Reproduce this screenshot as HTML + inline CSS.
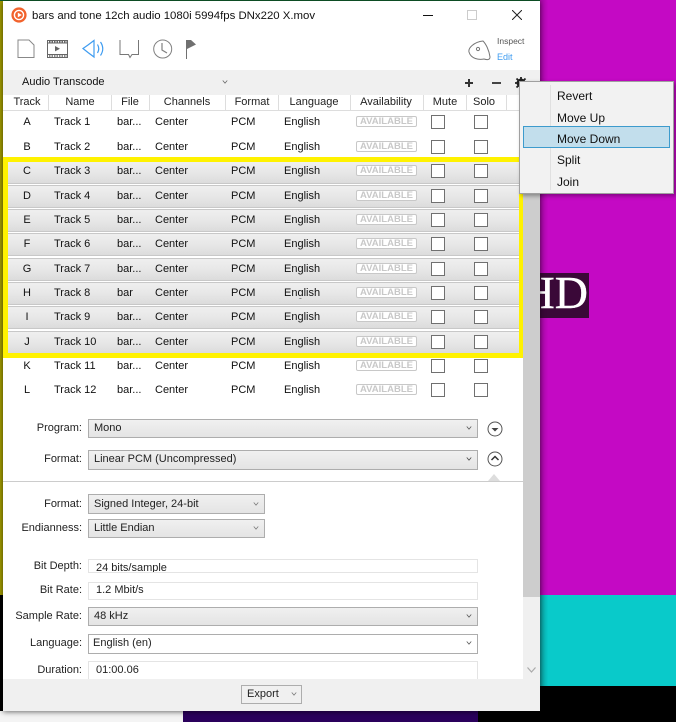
<!DOCTYPE html>
<html><head><meta charset="utf-8">
<style>
html,body{margin:0;padding:0;width:676px;height:722px;overflow:hidden;background:#000}
body{position:relative;font:11px "Liberation Sans",sans-serif;color:#111}
div,span,svg{position:absolute}
.win{left:3px;top:1px;width:537px;height:710px;background:#fff;box-shadow:0 1px 5px rgba(0,0,0,.55);overflow:hidden}
.t{white-space:nowrap;line-height:14px}
.h{top:94px;height:14px;line-height:14px;color:#222;white-space:nowrap;transform:translateX(-50%)}
.dv{top:94px;width:1px;height:15px;background:#ddd}
.r{left:0;width:520px;height:24px;overflow:hidden}
.g{left:5px;width:511px;height:21px;background:linear-gradient(#efefef,#e8e8e8 45%,#dcdcdc);border-top:1px solid #c8c8c8;border-bottom:1px solid #c8c8c8}
.r span{top:4px;line-height:14px;white-space:nowrap}
.a{left:0;width:48px;text-align:center}.b{left:51px}.c{left:114px}.d{left:152px}.e{left:228px}.f{left:281px}
.av{left:353px;top:5px!important;width:59px;height:9px;border:1px solid #c8c8c8;border-radius:2px;color:#c8c8c8;font-size:9.5px;font-weight:bold;line-height:9px!important;text-align:center;background:#fff;overflow:hidden}
.m,.s{top:4px!important;width:12px;height:12px;border:1px solid #707070;background:#fff}
.m{left:428px}.s{left:471px}
.lb{width:79px;left:0;text-align:right;line-height:14px;white-space:nowrap;color:#222}
.sel{left:85px;box-sizing:border-box;border:1px solid #adadad;background:linear-gradient(#f0f0f0,#e4e4e4);line-height:17px;padding-left:5px;color:#222;white-space:nowrap}
.fld{left:85px;box-sizing:border-box;width:390px;border:1px solid #e4e4e4;background:#fff;overflow:hidden;color:#222;white-space:nowrap}
.ch{width:6px;height:4px}
</style></head><body>
<!-- desktop -->
<div style="left:0;top:0;width:3px;height:595px;background:#a09a00"></div>
<div style="left:0;top:0;width:540px;height:1px;background:#0e5a2a"></div>
<div style="left:540px;top:0;width:136px;height:595px;background:linear-gradient(90deg,#a0089f,#c409c4 8px)"></div>
<div style="left:540px;top:595px;width:136px;height:91px;background:linear-gradient(90deg,#0a9a9a,#09caca 8px)"></div>
<div style="left:0;top:711px;width:183px;height:11px;background:#f4f4f4"></div>
<div style="left:183px;top:711px;width:295px;height:11px;background:#2a005c"></div>
<div style="left:540px;top:273px;width:49px;height:45px;background:#3a0838;overflow:hidden"><span style="right:1px;top:-4px;font:46px/48px 'Liberation Serif',serif;color:#fff;white-space:nowrap;-webkit-text-stroke:.4px #fff">HD</span></div>

<div class="win">
 <!-- title -->
 <svg style="left:8px;top:6px" width="16" height="16" viewBox="0 0 16 16"><circle cx="8" cy="8" r="7.6" fill="#f2622c"/><circle cx="8" cy="8" r="4.6" fill="none" stroke="#fff" stroke-width="1.4"/><path d="M6.8 5.6L10.8 8L6.8 10.4Z" fill="#fff"/></svg>
 <div class="t" style="left:29px;top:8px;font-size:11.4px;color:#111">bars and tone 12ch audio 1080i 5994fps DNx220 X.mov</div>
 <div style="left:420px;top:14px;width:10px;height:1px;background:#111"></div>
 <div style="left:464px;top:9px;width:8px;height:8px;border:1px solid #ccc"></div>
 <svg style="left:509px;top:9px" width="10" height="10" viewBox="0 0 10 10"><path d="M0 0L10 10M10 0L0 10" stroke="#222" stroke-width="1"/></svg>

 <!-- toolbar icons -->
 <svg style="left:14px;top:38px" width="18" height="20" viewBox="0 0 18 20" fill="none" stroke="#888" stroke-width="1"><path d="M1 1H12L17 6V18.5H1Z"/></svg>
 <svg style="left:44px;top:38px" width="22" height="20" viewBox="0 0 22 20"><rect x=".5" y="1.500" width="20" height="17" fill="none" stroke="#666"/><path d="M1 4H20M1 15.500H20" stroke="#666"/><path d="M2 2.700H20M2 17H20" stroke="#666" stroke-width="1.600" stroke-dasharray="1.500 1"/><path d="M8 7L13 9.700L8 12.400Z" fill="#666"/></svg>
 <svg style="left:79px;top:38px" width="25" height="20" viewBox="0 0 25 20" fill="none" stroke="#3f9cf0" stroke-width="1.200"><path d="M1 9.500L6 6L12 1.500V18L6 13.500Z"/><path d="M15.500 5.500Q18 9.700 15.500 14"/><path d="M18.500 3Q23 9.700 18.500 16.500"/></svg>
 <svg style="left:116px;top:38px" width="21" height="21" viewBox="0 0 21 21" fill="none" stroke="#777"><path d="M1 1V15.500H9.500L11 18.500L13 15.500H19.500V1"/></svg>
 <svg style="left:150px;top:38px" width="20" height="21" viewBox="0 0 20 21" fill="none" stroke="#808080"><circle cx="9.700" cy="10" r="9"/><path d="M9 4V11L14 14" stroke-width="1.200"/></svg>
 <svg style="left:182px;top:38px" width="12" height="21" viewBox="0 0 12 21"><path d="M1.500 1V20" stroke="#707070"/><path d="M2 1H6L11 5.500L2 10Z" fill="#707070"/></svg>
 <svg style="left:465px;top:39px" width="24" height="22" viewBox="0 0 24 22" fill="none" stroke="#777"><path d="M1 12C0 8 6 2 15 1C18 4 21 10 22 17C22 20 19 20 16 19C11 20 3 19 1 12Z"/><circle cx="10" cy="9" r="1.600"/></svg>
 <div class="t" style="left:494px;top:33px;font-size:8.500px;color:#555">Inspect</div>
 <div class="t" style="left:494px;top:49px;font-size:9px;color:#3f9cf0">Edit</div>

 <!-- strip -->
 <div style="left:0;top:69px;width:537px;height:25px;background:#f0f0f0"></div>
 <div class="t" style="left:19px;top:74px;font-size:11px;color:#111">Audio Transcode</div>
 <svg class="ch" style="left:219px;top:79px" viewBox="0 0 8 5"><path d="M1 .5L4 4L7 .5" fill="none" stroke="#666"/></svg>
 <svg style="left:461px;top:77px" width="10" height="10" viewBox="0 0 10 10"><path d="M5 1V9M1 5H9" stroke="#333" stroke-width="2"/></svg>
 <div style="left:489px;top:81px;width:9px;height:2px;background:#444"></div>
 <svg style="left:512px;top:76px" width="12" height="12" viewBox="0 0 12 12"><circle cx="6" cy="6" r="3.300" fill="none" stroke="#222" stroke-width="2.400"/><path d="M6 0V12M0 6H12M1.500 1.500L10.500 10.500M10.500 1.500L1.500 10.500" stroke="#222" stroke-width="1.800"/></svg>

 <!-- header -->
 <div class="h" style="left:24px">Track</div><div class="h" style="left:77px">Name</div><div class="h" style="left:127px">File</div><div class="h" style="left:184px">Channels</div><div class="h" style="left:249px">Format</div><div class="h" style="left:311px">Language</div><div class="h" style="left:383px">Availability</div><div class="h" style="left:442px">Mute</div><div class="h" style="left:481px">Solo</div>
 <div class="dv" style="left:45px"></div><div class="dv" style="left:108px"></div><div class="dv" style="left:146px"></div><div class="dv" style="left:222px"></div><div class="dv" style="left:275px"></div><div class="dv" style="left:347px"></div><div class="dv" style="left:420px"></div><div class="dv" style="left:463px"></div><div class="dv" style="left:503px"></div>
 <div style="left:0;top:109px;width:520px;height:1px;background:#ddd"></div>

 <!-- rows -->
 <div class="r" style="top:110px"><span class="a">A</span><span class="b">Track 1</span><span class="c">bar...</span><span class="d">Center</span><span class="e">PCM</span><span class="f">English</span><span class="av">AVAILABLE</span><span class="m"></span><span class="s"></span></div>
 <div style="left:0;top:110px;width:345px;height:6px;background:#fff"></div>
 <div class="r" style="top:135px"><span class="a">B</span><span class="b">Track 2</span><span class="c">bar...</span><span class="d">Center</span><span class="e">PCM</span><span class="f">English</span><span class="av">AVAILABLE</span><span class="m"></span><span class="s"></span></div>
 <div class="g" style="top:160px"></div><div class="r" style="top:159px"><span class="a">C</span><span class="b">Track 3</span><span class="c">bar...</span><span class="d">Center</span><span class="e">PCM</span><span class="f">English</span><span class="av">AVAILABLE</span><span class="m"></span><span class="s"></span></div>
 <div class="g" style="top:184px"></div><div class="r" style="top:184px"><span class="a">D</span><span class="b">Track 4</span><span class="c">bar...</span><span class="d">Center</span><span class="e">PCM</span><span class="f">English</span><span class="av">AVAILABLE</span><span class="m"></span><span class="s"></span></div>
 <div class="g" style="top:208px"></div><div class="r" style="top:208px"><span class="a">E</span><span class="b">Track 5</span><span class="c">bar...</span><span class="d">Center</span><span class="e">PCM</span><span class="f">English</span><span class="av">AVAILABLE</span><span class="m"></span><span class="s"></span></div>
 <div class="g" style="top:232px"></div><div class="r" style="top:232px"><span class="a">F</span><span class="b">Track 6</span><span class="c">bar...</span><span class="d">Center</span><span class="e">PCM</span><span class="f">English</span><span class="av">AVAILABLE</span><span class="m"></span><span class="s"></span></div>
 <div class="g" style="top:257px"></div><div class="r" style="top:257px"><span class="a">G</span><span class="b">Track 7</span><span class="c">bar...</span><span class="d">Center</span><span class="e">PCM</span><span class="f">English</span><span class="av">AVAILABLE</span><span class="m"></span><span class="s"></span></div>
 <div class="g" style="top:281px"></div><div class="r" style="top:281px"><span class="a">H</span><span class="b">Track 8</span><span class="c">bar</span><span class="d">Center</span><span class="e">PCM</span><span class="f">English</span><span class="av">AVAILABLE</span><span class="m"></span><span class="s"></span></div>
 <div style="left:5px;top:295px;width:340px;height:2px;background:#e3e3e3"></div>
 <div class="g" style="top:305px"></div><div class="r" style="top:305px"><span class="a">I</span><span class="b">Track 9</span><span class="c">bar...</span><span class="d">Center</span><span class="e">PCM</span><span class="f">English</span><span class="av">AVAILABLE</span><span class="m"></span><span class="s"></span></div>
 <div class="g" style="top:330px"></div><div class="r" style="top:330px"><span class="a">J</span><span class="b">Track 10</span><span class="c">bar...</span><span class="d">Center</span><span class="e">PCM</span><span class="f">English</span><span class="av">AVAILABLE</span><span class="m"></span><span class="s"></span></div>
 <div class="r" style="top:354px"><span class="a">K</span><span class="b">Track 11</span><span class="c">bar...</span><span class="d">Center</span><span class="e">PCM</span><span class="f">English</span><span class="av">AVAILABLE</span><span class="m"></span><span class="s"></span></div>
 <div style="left:0;top:354px;width:345px;height:6px;background:#fff"></div>
 <div class="r" style="top:378px"><span class="a">L</span><span class="b">Track 12</span><span class="c">bar...</span><span class="d">Center</span><span class="e">PCM</span><span class="f">English</span><span class="av">AVAILABLE</span><span class="m"></span><span class="s"></span></div>

 <!-- yellow -->
 <div style="left:0;top:156px;width:511px;height:191px;border:5px solid #fff200;border-right-width:4px;box-sizing:content-box"></div>

 <!-- scrollbar -->
 <div style="left:520px;top:110px;width:17px;height:568px;background:#f0f0f0"></div>
 <div style="left:520px;top:110px;width:17px;height:486px;background:#cdcdcd"></div>
 <svg style="left:524px;top:666px" width="9" height="6" viewBox="0 0 9 6"><path d="M.5 .5L4.500 5L8.500 .5" fill="none" stroke="#aaa" stroke-width="1.200"/></svg>

 <!-- form -->
 <div class="lb" style="top:420px">Program:</div>
 <div class="sel" style="top:418px;width:390px;height:19px">Mono</div>
 <svg class="ch" style="left:463px;top:425px" viewBox="0 0 8 5"><path d="M1 .5L4 4L7 .5" fill="none" stroke="#555"/></svg>
 <svg style="left:484px;top:420px" width="16" height="16" viewBox="0 0 16 16" fill="none"><circle cx="8" cy="8" r="7" stroke="#555"/><path d="M4.500 7H11.500L8 10.500Z" fill="#444"/></svg>
 <div class="lb" style="top:451px">Format:</div>
 <div class="sel" style="top:449px;width:390px;height:20px">Linear PCM (Uncompressed)</div>
 <svg class="ch" style="left:463px;top:456px" viewBox="0 0 8 5"><path d="M1 .5L4 4L7 .5" fill="none" stroke="#444"/></svg>
 <svg style="left:484px;top:450px" width="16" height="16" viewBox="0 0 16 16" fill="none"><circle cx="8" cy="8" r="7" stroke="#555"/><path d="M4.500 9L8 5.500L11.500 9" stroke="#333" stroke-width="1.500"/></svg>
 <div style="left:0;top:480px;width:520px;height:1px;background:#ccc"></div>
 <div style="left:485px;top:473px;width:0;height:0;border-left:6px solid transparent;border-right:6px solid transparent;border-bottom:7px solid #ddd"></div>

 <div class="lb" style="top:496px">Format:</div>
 <div class="sel" style="top:493px;width:177px;height:20px;line-height:18px">Signed Integer, 24-bit</div>
 <svg class="ch" style="left:250px;top:501px" viewBox="0 0 8 5"><path d="M1 .5L4 4L7 .5" fill="none" stroke="#777"/></svg>
 <div class="lb" style="top:520px">Endianness:</div>
 <div class="sel" style="top:518px;width:177px;height:19px">Little Endian</div>
 <svg class="ch" style="left:250px;top:525px" viewBox="0 0 8 5"><path d="M1 .5L4 4L7 .5" fill="none" stroke="#777"/></svg>

 <div class="lb" style="top:558px">Bit Depth:</div>
 <div class="fld" style="top:558px;height:14px;padding-left:7px;line-height:16px">24 bits/sample</div>
 <div class="lb" style="top:582px">Bit Rate:</div>
 <div class="fld" style="top:581px;height:18px;padding-left:7px;line-height:15px">1.2 Mbit/s</div>
 <div class="lb" style="top:608px">Sample Rate:</div>
 <div class="sel" style="top:606px;width:390px;height:19px">48 kHz</div>
 <svg class="ch" style="left:463px;top:613px" viewBox="0 0 8 5"><path d="M1 .5L4 4L7 .5" fill="none" stroke="#555"/></svg>
 <div class="lb" style="top:635px">Language:</div>
 <div class="sel" style="top:633px;width:390px;height:20px;background:#fff;padding-left:4px">English (en)</div>
 <svg class="ch" style="left:463px;top:640px" viewBox="0 0 8 5"><path d="M1 .5L4 4L7 .5" fill="none" stroke="#555"/></svg>
 <div class="lb" style="top:662px">Duration:</div>
 <div class="fld" style="top:660px;height:20px;padding-left:7px;line-height:16px">01:00.06</div>

 <!-- footer -->
 <div style="left:0;top:678px;width:537px;height:32px;background:#f0f0f0"></div>
 <div class="sel" style="left:238px;top:684px;width:61px;height:19px;background:#f0f0f0;padding-left:5px;line-height:16px;font-size:11px">Export</div>
 <svg class="ch" style="left:288px;top:691px" viewBox="0 0 8 5"><path d="M1 .5L4 4L7 .5" fill="none" stroke="#777"/></svg>
</div>

<!-- context menu -->
<div style="left:519px;top:81px;width:153px;height:111px;background:#f2f2f2;border:1px solid #a0a0a0;box-shadow:2px 2px 4px rgba(0,0,0,.35)">
 <div style="left:30px;top:3px;width:1px;height:105px;background:#e0e0e0"></div>
 <div style="left:3px;top:44px;width:145px;height:20px;background:#c2deec;border:1px solid #3d9bcd"></div>
 <div class="t" style="left:37px;top:7px;font-size:12px">Revert</div>
 <div class="t" style="left:37px;top:29px;font-size:12px">Move Up</div>
 <div class="t" style="left:37px;top:50px;font-size:12px">Move Down</div>
 <div class="t" style="left:37px;top:71px;font-size:12px">Split</div>
 <div class="t" style="left:37px;top:93px;font-size:12px">Join</div>
</div>
</body></html>
